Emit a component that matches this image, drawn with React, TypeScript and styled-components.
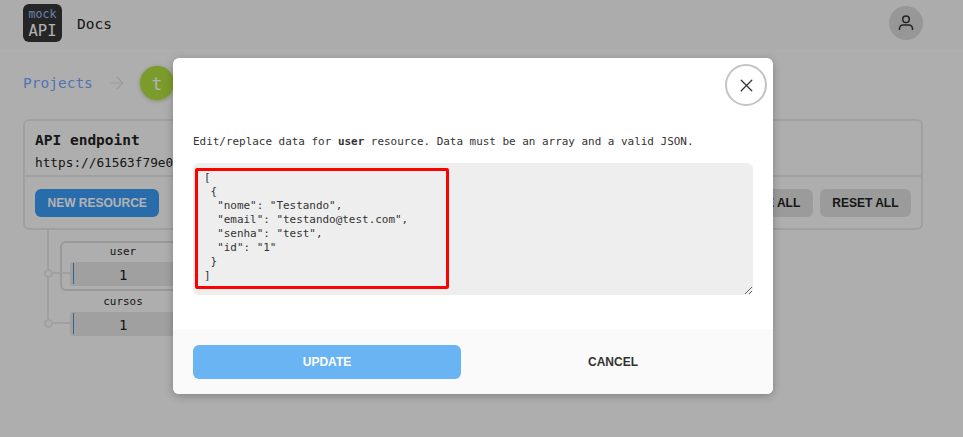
import React from "react";
import styled, { createGlobalStyle } from "styled-components";
import { ArrowRight, X } from "lucide-react";

const mono = `"DejaVu Sans Mono", "Liberation Mono", monospace`;
const sans = `"Liberation Sans", Arial, sans-serif`;

const Global = createGlobalStyle`
  html, body { margin: 0; padding: 0; height: 100%; overflow: hidden; background: #fafafa; }
  *, *::before, *::after { box-sizing: border-box; }
`;

const Page = styled.div`
  width: 963px;
  height: 437px;
  position: relative;
  overflow: hidden;
  font-family: ${mono};
  color: #222;
`;
const Header = styled.header`
  height: 48px;
  padding: 4px 40px 0 23px;
  display: flex;
  align-items: flex-start;
  background: #f7f7f7;
  box-shadow: 0 1px 2px rgba(0, 0, 0, 0.03);
`;
const Logo = styled.div`
  width: 39px;
  height: 38px;
  border-radius: 6px;
  background: #363636;
  display: flex;
  flex-direction: column;
  align-items: center;
  padding-top: 3px;
`;
const LogoTop = styled.span`
  font-size: 11.6px;
  line-height: 14px;
  color: #94bef7;
  height: 15px;
`;
const LogoBottom = styled.span`
  font-size: 15.5px;
  line-height: 18px;
  color: #fff;
`;
const DocsLink = styled.span`
  margin: 13px 0 0 15px;
  font-size: 14.5px;
  line-height: 14px;
`;
const Avatar = styled.div`
  margin: 2px 0 0 auto;
  width: 34px;
  height: 34px;
  border-radius: 50%;
  background: #d8d8d8;
  display: flex;
  align-items: center;
  justify-content: center;
`;
const Main = styled.main`
  padding: 18px 40px 0 23px;
`;
const Crumbs = styled.nav`
  height: 34px;
  display: flex;
  align-items: center;
`;
const CrumbLink = styled.span`
  font-size: 14.5px;
  color: #75a6ff;
`;
const CrumbArrow = styled.span`
  display: flex;
  margin: 0 13px 0 14px;
  color: #dcdcdc;
`;
const ProjectBadge = styled.span`
  width: 34px;
  height: 34px;
  border-radius: 50%;
  background: #b0e040;
  color: #fff;
  font-size: 18px;
  display: flex;
  align-items: center;
  justify-content: center;
  box-shadow: 0 1px 4px rgba(120, 160, 40, 0.5);
`;
const Card = styled.section`
  margin-top: 19px;
  height: 111px;
  border: 2px solid #e6e6e6;
  border-radius: 6px;
`;
const CardTop = styled.div`
  height: 56px;
  padding: 11px 10px 0;
  border-bottom: 2px solid #e6e6e6;
`;
const CardTitle = styled.div`
  font-size: 14.5px;
  font-weight: 700;
  line-height: 17px;
`;
const CardUrl = styled.div`
  font-size: 12.75px;
  line-height: 17px;
  margin-top: 5px;
`;
const CardActions = styled.div`
  height: 53px;
  padding: 12px 10px 0;
  display: flex;
  gap: 7px;
`;
const ActionButton = styled.button<{ $primary?: boolean }>`
  height: 28px;
  border: 0;
  border-radius: 6px;
  font-family: ${sans};
  font-size: 12px;
  font-weight: 700;
  padding: 0 12.5px;
  background: ${(p) => (p.$primary ? "#3c9bf5" : "#dfdfdf")};
  color: ${(p) => (p.$primary ? "#fff" : "#222")};
  &:first-child {
    margin-right: auto;
  }
`;
const Tree = styled.div`
  position: relative;
  margin: -1px 0 0 24px;
  padding: 12px 0 0 13px;
  &::before {
    content: "";
    position: absolute;
    left: 0;
    top: 0;
    width: 2px;
    height: 90px;
    background: #e6e6e6;
  }
`;
const Resource = styled.div<{ $boxed?: boolean }>`
  position: relative;
  width: 320px;
  height: 50px;
  padding: 2px 8px 0;
  border: 2px solid ${(p) => (p.$boxed ? "#dcdcdc" : "transparent")};
  border-radius: 6px;
  text-align: center;
  &::before {
    content: "";
    position: absolute;
    left: -18px;
    top: 26px;
    width: 9px;
    height: 9px;
    border: 2px solid #e6e6e6;
    border-radius: 50%;
    background: #fafafa;
  }
  &::after {
    content: "";
    position: absolute;
    left: -9px;
    top: 29px;
    width: 20px;
    height: 2px;
    background: #e6e6e6;
  }
`;
const ResourceName = styled.div`
  width: 106px;
  font-size: 10.95px;
  line-height: 14px;
`;
const Counter = styled.div`
  position: relative;
  margin-top: 3px;
  height: 24px;
  background: #e6e6e6;
  border-radius: 2px;
  font-size: 14px;
  line-height: 27px;
  text-align: left;
  padding-left: 49px;
  &::before {
    content: "";
    position: absolute;
    left: 3px;
    top: 1px;
    bottom: 2px;
    width: 1px;
    background: #4a90e0;
  }
`;
const Overlay = styled.div`
  position: absolute;
  inset: 0;
  background: rgba(0, 0, 0, 0.3);
  padding: 58px 17px 0 0;
  display: flex;
  justify-content: center;
  align-items: flex-start;
`;
const Modal = styled.div`
  width: 600px;
  height: 336px;
  background: #fff;
  border-radius: 6px;
  box-shadow: 0 2px 8px rgba(0, 0, 0, 0.25);
  display: flex;
  flex-direction: column;
  overflow: hidden;
`;
const ModalHead = styled.div`
  height: 77px;
  padding: 6px 6px 0 0;
  display: flex;
  justify-content: flex-end;
`;
const CloseButton = styled.button`
  width: 42px;
  height: 42px;
  border-radius: 50%;
  border: 2px solid #c4c4c4;
  background: #fff;
  padding: 0;
  display: flex;
  align-items: center;
  justify-content: center;
  color: #333;
`;
const ModalBody = styled.div`
  flex: 1;
  padding: 0 20px;
`;
const Intro = styled.p`
  margin: 0;
  font-size: 10.95px;
  line-height: 14px;
  color: #333;
`;
const EditorWrap = styled.div`
  position: relative;
  margin-top: 14px;
`;
const Editor = styled.textarea`
  display: block;
  width: 560px;
  height: 132px;
  border: 0;
  outline: 0;
  border-radius: 6px;
  background: #eeeeee;
  padding: 8px 11px;
  font-family: ${mono};
  font-size: 10.95px;
  line-height: 14px;
  color: #333;
`;
const Highlight = styled.div`
  position: absolute;
  left: 2px;
  top: 5px;
  width: 254px;
  height: 121px;
  border: 3px solid #ff0000;
  border-radius: 2px;
  pointer-events: none;
`;
const ModalFoot = styled.div`
  height: 65px;
  background: #fafafa;
  padding: 16px 20px 0;
  display: flex;
  gap: 12px;
  align-items: flex-start;
`;
const FootButton = styled.button<{ $primary?: boolean }>`
  height: 34px;
  border: 0;
  border-radius: 6px;
  padding: 0;
  font-family: ${sans};
  font-size: 12px;
  font-weight: 700;
  width: ${(p) => (p.$primary ? "268px" : "280px")};
  background: ${(p) => (p.$primary ? "#6bb4f3" : "transparent")};
  color: ${(p) => (p.$primary ? "#fff" : "#333")};
`;

const json = `[
 {
  "nome": "Testando",
  "email": "testando@test.com",
  "senha": "test",
  "id": "1"
 }
]`;

function PersonIcon() {
  return (
    <svg width="24" height="24" viewBox="0 0 24 24" fill="none" stroke="#333" strokeWidth="1.5">
      <circle cx="12" cy="8.3" r="3.3" />
      <path d="M5.5 19v-1.5A3.5 3.5 0 0 1 9 14h6a3.5 3.5 0 0 1 3.5 3.5V19" />
    </svg>
  );
}

export default function App() {
  return (
    <Page>
      <Global />
      <Header>
        <Logo>
          <LogoTop>mock</LogoTop>
          <LogoBottom>API</LogoBottom>
        </Logo>
        <DocsLink>Docs</DocsLink>
        <Avatar>
          <PersonIcon />
        </Avatar>
      </Header>
      <Main>
        <Crumbs>
          <CrumbLink>Projects</CrumbLink>
          <CrumbArrow>
            <ArrowRight size={20} strokeWidth={1.4} />
          </CrumbArrow>
          <ProjectBadge>t</ProjectBadge>
        </Crumbs>
        <Card>
          <CardTop>
            <CardTitle>API endpoint</CardTitle>
            <CardUrl>https://61563f79e039a0001725ac1a.mockapi.io/</CardUrl>
          </CardTop>
          <CardActions>
            <ActionButton $primary>NEW RESOURCE</ActionButton>
            <ActionButton>GENERATE ALL</ActionButton>
            <ActionButton>RESET ALL</ActionButton>
          </CardActions>
        </Card>
        <Tree>
          <Resource $boxed>
            <ResourceName>user</ResourceName>
            <Counter>1</Counter>
          </Resource>
          <Resource>
            <ResourceName>cursos</ResourceName>
            <Counter>1</Counter>
          </Resource>
        </Tree>
      </Main>
      <Overlay>
        <Modal>
          <ModalHead>
            <CloseButton aria-label="Close">
              <X size={21} strokeWidth={1.5} />
            </CloseButton>
          </ModalHead>
          <ModalBody>
            <Intro>
              Edit/replace data for <b>user</b> resource. Data must be an array and a valid JSON.
            </Intro>
            <EditorWrap>
              <Editor defaultValue={json} spellCheck={false} />
              <Highlight />
            </EditorWrap>
          </ModalBody>
          <ModalFoot>
            <FootButton $primary>UPDATE</FootButton>
            <FootButton>CANCEL</FootButton>
          </ModalFoot>
        </Modal>
      </Overlay>
    </Page>
  );
}
